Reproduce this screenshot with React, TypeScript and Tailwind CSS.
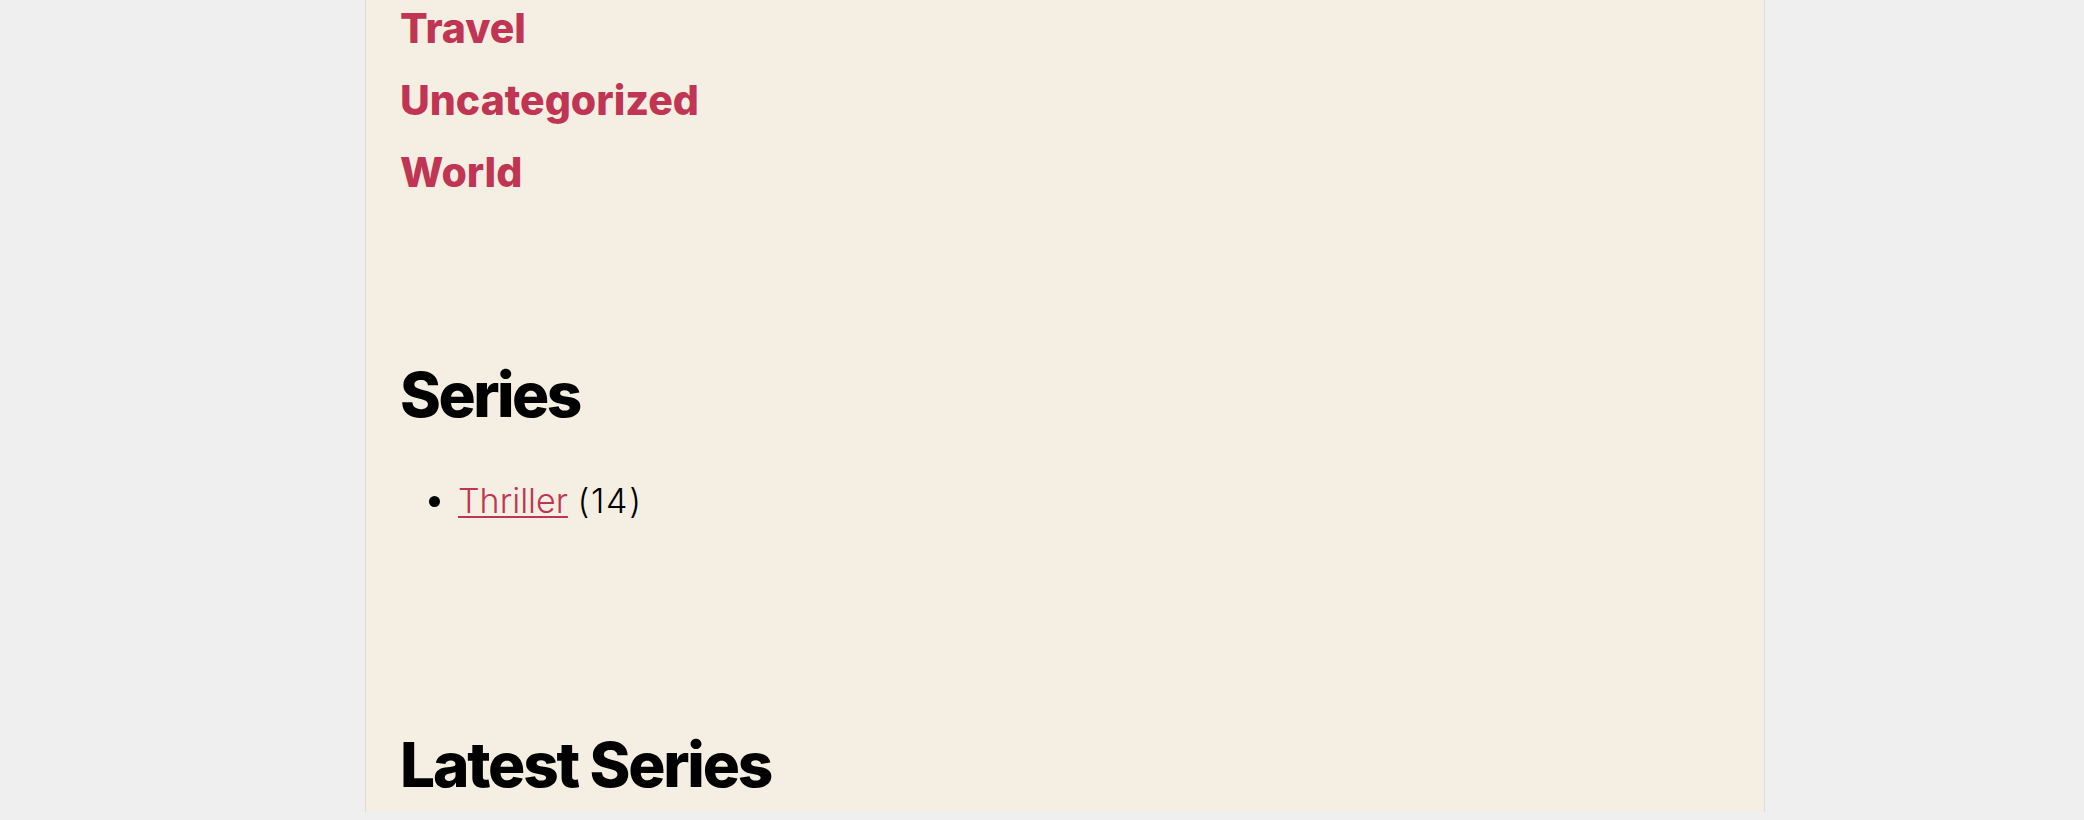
const CATEGORIES = ['Travel', 'Uncategorized', 'World'];

export default function App() {
  return (
    <div
      className="min-h-[820px] w-full overflow-hidden bg-[#efefef]"
      style={{ fontFamily: 'Inter, "Liberation Sans", sans-serif' }}
    >
      <div className="ml-[365px] min-h-[820px] w-[1400px] border-x border-[#dcdcd8] bg-[#f4efe2] pl-[34px]">
        {/* categories */}
        <ul className="-mt-[8px]">
          {CATEGORIES.map((c) => (
            <li key={c} className="text-[41px] font-extrabold leading-[72px] text-[#bf3553]">
              <a href="#">{c}</a>
            </li>
          ))}
        </ul>

        {/* series widget */}
        <section className="mt-[147px]">
          <h2 className="text-[62px] font-extrabold leading-[79px] tracking-[-0.04em] text-black">Series</h2>
          <ul className="mt-[41px] list-disc pl-[58px] text-[34px] font-light leading-[51px] text-black">
            <li>
              <a href="#" className="text-[#bf3553] underline decoration-[2px] underline-offset-[3px]">
                Thriller
              </a>{' '}
              <span className="tracking-[0.05em]">(14)</span>
            </li>
          </ul>
        </section>

        {/* latest series */}
        <section className="mt-[199px]">
          <h2 className="text-[62px] font-extrabold leading-[79px] tracking-[-0.035em] text-black">Latest Series</h2>
        </section>
      </div>
    </div>
  );
}
